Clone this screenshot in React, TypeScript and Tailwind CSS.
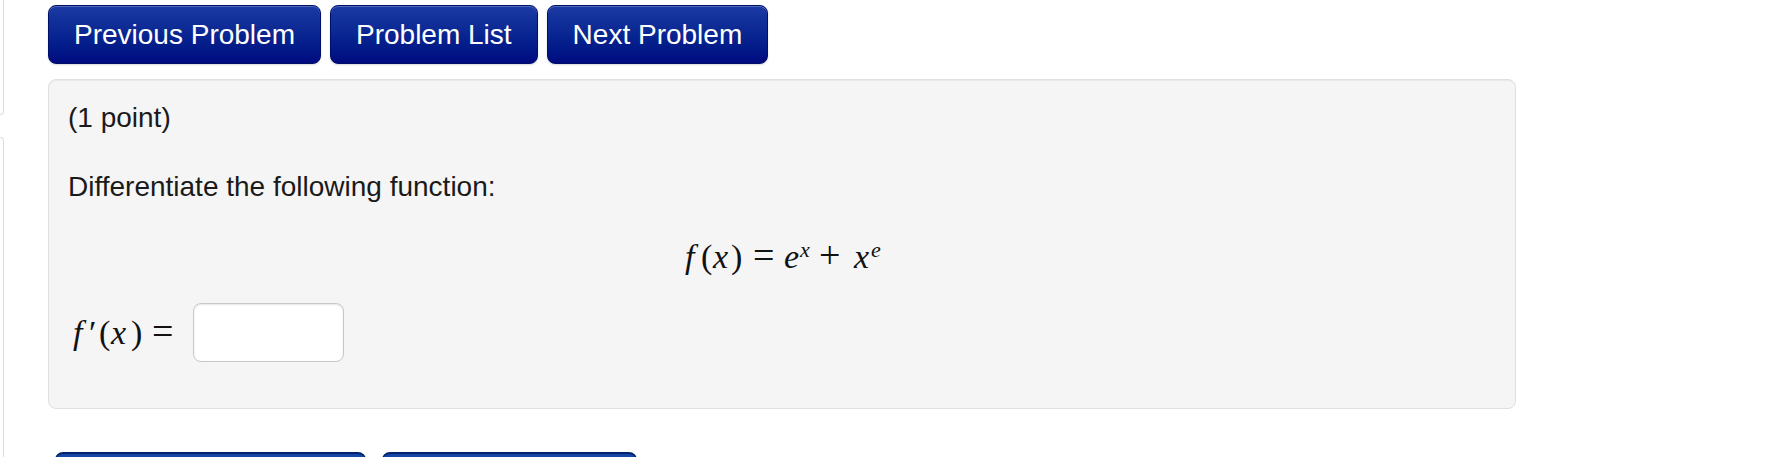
import React from "react";

function NavButton({ label }: { label: string }) {
  return (
    <button className="h-[59px] px-[25px] rounded-[8px] border border-[#00106a] bg-linear-to-b from-[#1b3aa3] to-[#00097f] text-white text-[28px] leading-none whitespace-nowrap shadow-[inset_0_1px_0_rgba(255,255,255,0.25),0_1px_2px_rgba(0,0,40,0.15)] font-['Liberation_Sans',Arial,sans-serif]">
      {label}
    </button>
  );
}

function Formula() {
  return (
    <div className="mt-[30px] h-[40px] text-center text-[34px] leading-[40px] text-[#111] font-['Liberation_Serif','Times_New_Roman',serif] whitespace-nowrap">
      <span className="inline-block w-[21px] pl-[5px] text-left italic">f</span>
      <span className="inline-block w-[12px] text-left">(</span>
      <span className="inline-block w-[18px] text-left italic">x</span>
      <span className="inline-block w-[22px] text-left">)</span>
      <span className="inline-block w-[31px] text-left text-[38px] leading-[32px]">=</span>
      <span className="inline-block w-[16px] text-left italic">e</span>
      <span className="inline-block w-[19px] text-left italic text-[22px] leading-none align-[11px]">x</span>
      <span className="inline-block w-[35px] text-left text-[38px] leading-[32px]">+</span>
      <span className="inline-block w-[17px] text-left italic">x</span>
      <span className="inline-block w-[13px] text-left italic text-[22px] leading-none align-[11px]">e</span>
    </div>
  );
}

export default function App() {
  return (
    <div className="flex h-[457px] w-full overflow-hidden bg-white font-['Liberation_Sans',Arial,sans-serif]">
      {/* clipped sidebar edges */}
      <div className="flex w-[4px] shrink-0 flex-col">
        <div className="h-[115px] rounded-br-[4px] border-r border-b border-[#dddddd]" />
        <div className="mt-[22px] flex-1 rounded-tr-[4px] border-r border-t border-[#dddddd]" />
      </div>

      <div className="flex-1 pl-[44px] pt-[5px]">
        <div className="flex gap-[9px]">
          <NavButton label="Previous Problem" />
          <NavButton label="Problem List" />
          <NavButton label="Next Problem" />
        </div>

        <div className="mt-[15px] w-[1468px] rounded-[8px] border border-[#e0e0e0] bg-[#f5f5f5] px-[19px] pt-[18px] pb-[46px] text-[#1a1a1a] shadow-[inset_0_1px_1px_rgba(0,0,0,0.05)]">
          <p className="text-[28px] leading-[40px]">(1 point)</p>
          <p className="mt-[29px] text-[28px] leading-[40px]">Differentiate the following function:</p>
          <Formula />
          <div className="mt-[26px] flex items-center">
            <div className="text-[34px] leading-[40px] text-[#111] font-['Liberation_Serif','Times_New_Roman',serif] whitespace-nowrap">
              <span className="inline-block w-[21px] pl-[5px] text-left italic">f</span>
              <span className="inline-block w-[10px] text-left">′</span>
              <span className="inline-block w-[12px] text-left">(</span>
              <span className="inline-block w-[20px] text-left italic">x</span>
              <span className="inline-block w-[21px] text-left">)</span>
              <span className="inline-block w-[26px] text-left text-[38px] leading-[32px]">=</span>
            </div>
            <input
              type="text"
              className="ml-[15px] h-[59px] w-[151px] rounded-[8px] border border-[#c8c8c8] bg-white shadow-[inset_0_1px_2px_rgba(0,0,0,0.1)] outline-none"
            />
          </div>
        </div>

        <div className="mt-[43px] flex gap-[16px] pl-[7px]">
          <div className="h-[59px] w-[311px] rounded-[8px] border border-[#00246b] border-t-2 bg-linear-to-b from-[#1546a6] to-[#0a2f8a]" />
          <div className="h-[59px] w-[255px] rounded-[8px] border border-[#00246b] border-t-2 bg-linear-to-b from-[#1546a6] to-[#0a2f8a]" />
        </div>
      </div>
    </div>
  );
}
